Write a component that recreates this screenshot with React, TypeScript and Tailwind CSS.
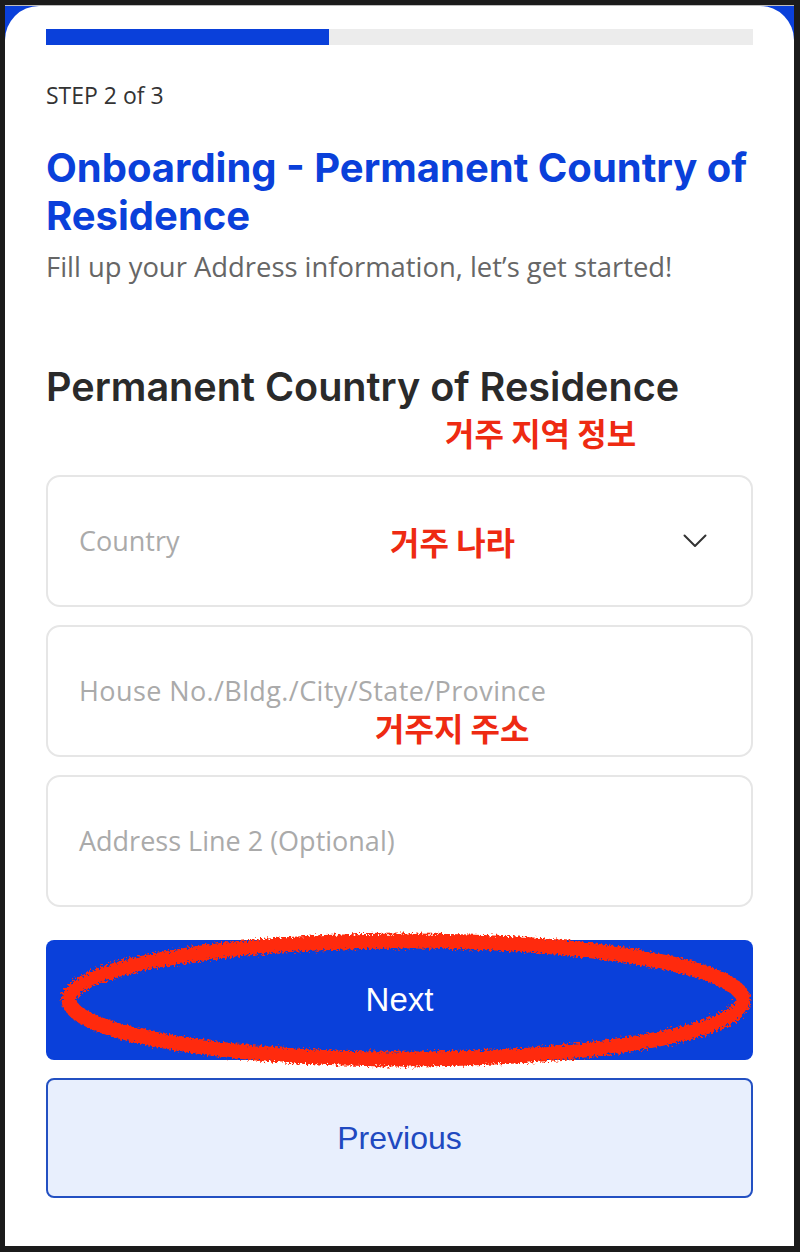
import React from "react";

function Chevron() {
  return (
    <svg width="24" height="14" viewBox="0 0 24 14" className="shrink-0">
      <polyline
        points="1.5,1.5 12,12 22.5,1.5"
        fill="none"
        stroke="#333"
        strokeWidth="2"
        strokeLinecap="round"
        strokeLinejoin="round"
      />
    </svg>
  );
}

export default function App() {
  return (
    <div className="w-[800px] h-[1252px] bg-[#1b1b1b] pl-[5px] pt-[5px] pr-[6px] pb-[6px] font-['Open_Sans',sans-serif]">
      <div className="relative w-full h-full bg-[#0a40da] border-t border-[#bdbdbd]">
        <div className="w-full h-full bg-white rounded-t-[34px] pt-[23px] px-[41px] flex flex-col">
          {/* progress */}
          <div className="h-[16px] w-full bg-[#ececec] flex">
            <div className="h-full w-[40%] bg-[#0a40da]" />
          </div>

          <div className="mt-[36px] text-[23px] leading-[28px] text-[#333]">STEP 2 of 3</div>

          <h1 className="mt-[35px] text-[40px] leading-[48px] font-bold text-[#0a40da] font-['Inter',sans-serif]">
            Onboarding - Permanent Country of Residence
          </h1>

          <p className="mt-[11px] text-[27.4px] leading-[32px] text-[#666]">
            Fill up your Address information, let’s get started!
          </p>

          <h2 className="mt-[82px] text-[39.6px] leading-[44px] font-semibold text-[#2a2a2a] font-['Inter',sans-serif]">
            Permanent Country of Residence
          </h2>

          <div className="mt-[5px] pl-[399px] text-[32px] leading-[36px] font-bold text-[#ee2a12] font-['Noto_Sans_CJK_KR',sans-serif]">
            거주 지역 정보
          </div>

          <div className="mt-[25px] flex flex-col gap-[18px]">
            <div className="relative h-[132px] rounded-[14px] border-2 border-[#e6e6e6] flex items-center justify-between pl-[31px] pr-[44px]">
              <span className="text-[27px] leading-[30px] text-[#aaa]">Country</span>
              <Chevron />
              <span className="absolute left-[342px] top-[48px] text-[32px] leading-[32px] font-bold text-[#ee2a12] font-['Noto_Sans_CJK_KR',sans-serif]">
                거주 나라
              </span>
            </div>

            <div className="relative h-[132px] rounded-[14px] border-2 border-[#e6e6e6] flex items-center pl-[31px]">
              <span className="text-[27px] leading-[30px] text-[#aaa] tracking-[0.4px]">
                House No./Bldg./City/State/Province
              </span>
              <span className="absolute left-[327px] top-[84px] text-[32px] leading-[32px] font-bold text-[#ee2a12] font-['Noto_Sans_CJK_KR',sans-serif]">
                거주지 주소
              </span>
            </div>

            <div className="h-[132px] rounded-[14px] border-2 border-[#e6e6e6] flex items-center pl-[31px]">
              <span className="text-[27px] leading-[30px] text-[#aaa]">Address Line 2 (Optional)</span>
            </div>
          </div>

          <button className="mt-[33px] h-[120px] w-full rounded-[8px] bg-[#0a40da] text-white text-[33px] font-['Liberation_Sans',sans-serif]">
            Next
          </button>

          <button className="mt-[18px] h-[120px] w-full rounded-[8px] bg-[#e8effd] border-2 border-[#2350c2] text-[#2049c0] text-[32px] font-['Liberation_Sans',sans-serif]">
            Previous
          </button>
        </div>

        {/* red hand-drawn ellipse annotation */}
        <svg
          className="absolute left-0 top-0 pointer-events-none"
          width="789"
          height="1241"
          viewBox="0 0 789 1241"
        >
          <defs>
            <filter id="rough" x="-5%" y="-20%" width="110%" height="140%">
              <feTurbulence type="fractalNoise" baseFrequency="0.45" numOctaves="2" seed="3" result="n" />
              <feDisplacementMap in="SourceGraphic" in2="n" scale="8" />
            </filter>
          </defs>
          <ellipse
            cx="401"
            cy="994"
            rx="337"
            ry="59"
            fill="none"
            stroke="#ff2a0a"
            strokeWidth="15"
            filter="url(#rough)"
          />
        </svg>
      </div>
    </div>
  );
}
